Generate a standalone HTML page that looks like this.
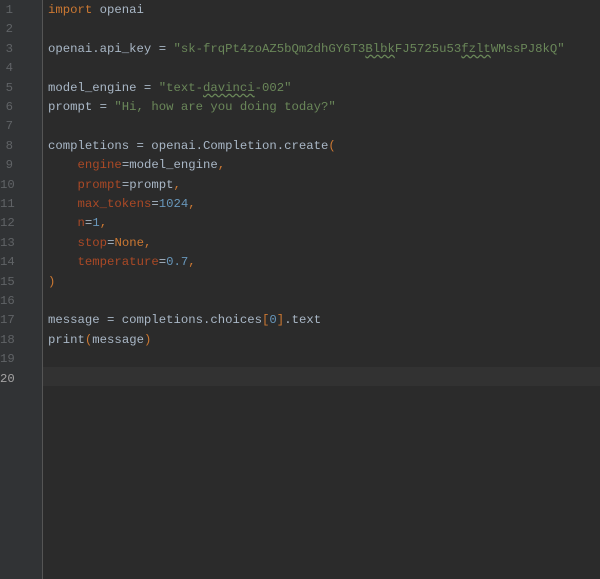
<!DOCTYPE html>
<html><head><style>
body{margin:0;width:600px;height:579px;background:#2b2b2b;overflow:hidden;font-family:"Liberation Mono","DejaVu Sans Mono",monospace;font-size:12.3px;}
.g{position:absolute;left:0;top:0;width:42px;height:579px;background:#313335;border-right:1px solid #555;}
.hl{position:absolute;left:43px;top:367px;width:557px;height:19px;background:#323232;}
.ln{position:absolute;left:0;width:13px;text-align:right;color:#606366;}
.c{position:absolute;left:48px;color:#a9b7c6;white-space:pre;}
.k{color:#cc7832}.s{color:#6a8759}.n{color:#6897bb}.p{color:#aa4926}
.u{text-decoration:underline wavy #6a8759;text-underline-offset:2px}
</style></head><body>
<div class="g"></div><div class="hl"></div>
<div style="position:absolute;top:2px;left:0">
<div class="ln" style="top:1px">1</div>
<div class="ln" style="top:20.4px">2</div>
<div class="ln" style="top:39.8px">3</div>
<div class="ln" style="top:59.2px">4</div>
<div class="ln" style="top:78.6px">5</div>
<div class="ln" style="top:98px">6</div>
<div class="ln" style="top:117.4px">7</div>
<div class="ln" style="top:136.8px">8</div>
<div class="ln" style="top:156.2px">9</div>
<div class="ln" style="top:175.6px">10</div>
<div class="ln" style="top:195px">11</div>
<div class="ln" style="top:214.4px">12</div>
<div class="ln" style="top:233.8px">13</div>
<div class="ln" style="top:253.2px">14</div>
<div class="ln" style="top:272.6px">15</div>
<div class="ln" style="top:292px">16</div>
<div class="ln" style="top:311.4px">17</div>
<div class="ln" style="top:330.8px">18</div>
<div class="ln" style="top:350.2px">19</div>
<div class="ln" style="top:369.6px;color:#a4a3a3">20</div>
<div class="c" style="top:1px"><span class="k">import</span> openai</div>
<div class="c" style="top:39.8px">openai.api_key = <span class="s">"sk-frqPt4zoAZ5bQm2dhGY6T3<span class="u">Blbk</span>FJ5725u53<span class="u">fzlt</span>WMssPJ8kQ"</span></div>
<div class="c" style="top:78.6px">model_engine = <span class="s">"text-<span class="u">davinci</span>-002"</span></div>
<div class="c" style="top:98px">prompt = <span class="s">"Hi, how are you doing today?"</span></div>
<div class="c" style="top:136.8px">completions = openai.Completion.create<span class="k">(</span></div>
<div class="c" style="top:156.2px">    <span class="p">engine</span>=model_engine<span class="k">,</span></div>
<div class="c" style="top:175.6px">    <span class="p">prompt</span>=prompt<span class="k">,</span></div>
<div class="c" style="top:195px">    <span class="p">max_tokens</span>=<span class="n">1024</span><span class="k">,</span></div>
<div class="c" style="top:214.4px">    <span class="p">n</span>=<span class="n">1</span><span class="k">,</span></div>
<div class="c" style="top:233.8px">    <span class="p">stop</span>=<span class="k">None,</span></div>
<div class="c" style="top:253.2px">    <span class="p">temperature</span>=<span class="n">0.7</span><span class="k">,</span></div>
<div class="c" style="top:272.6px"><span class="k">)</span></div>
<div class="c" style="top:311.4px">message = completions.choices<span class="k">[</span><span class="n">0</span><span class="k">]</span>.text</div>
<div class="c" style="top:330.8px">print<span class="k">(</span>message<span class="k">)</span></div>
</div>
</body></html>
